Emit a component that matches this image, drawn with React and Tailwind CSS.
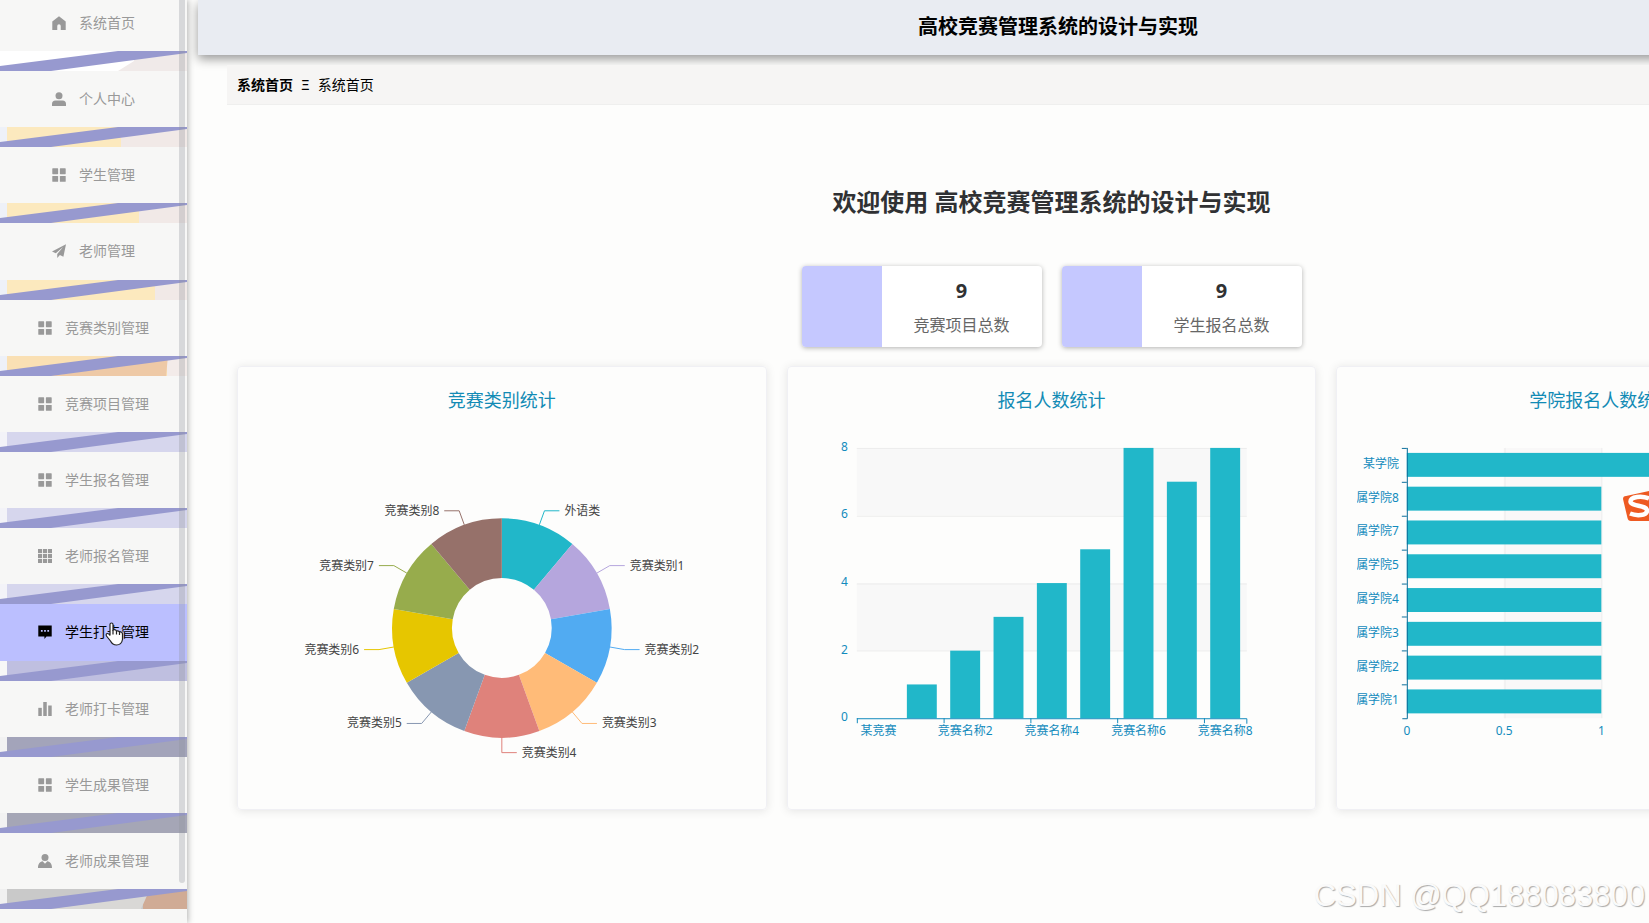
import React from "react";

// Sidebar icons, all on a 24x24 box
const icons = {
  home: <path d="M12 0.500 0.500 9.500V24H9v-7a3 3 0 0 1 6 0v7h8.500V9.500z" />,
  user: (
    <>
      <circle cx="12" cy="6.5" r="6" />
      <path d="M0 24v-3.500a6 6 0 0 1 6-6h12a6 6 0 0 1 6 6V24z" />
    </>
  ),
  grid: (
    <>
      <rect x="0.500" y="0.500" width="10" height="10" rx="1" />
      <rect x="13.500" y="0.500" width="10" height="10" rx="1" />
      <rect x="0.500" y="13.500" width="10" height="10" rx="1" />
      <rect x="13.500" y="13.500" width="10" height="10" rx="1" />
    </>
  ),
  send: <path d="M24 0.500 0 13l6.500 3L19 5 9 17v7l4.500-5 6 3z" />,
  grid9: (
    <>
      {[0, 8.5, 17].map((x) =>
        [0, 8.5, 17].map((y) => (
          <rect key={`${x}-${y}`} x={x} y={y} width="7" height="7" />
        ))
      )}
    </>
  ),
  chat: (
    <path
      fillRule="evenodd"
      d="M0.500 1h23v18.500h-9L11 24v-4.500H0.500zM5 8.500v3h3v-3zM10.500 8.500v3h3v-3zM16 8.500v3h3v-3z"
    />
  ),
  chart: (
    <>
      <rect x="0.500" y="10" width="6" height="14" />
      <rect x="9" y="0" width="6" height="24" />
      <rect x="17.500" y="6" width="6" height="18" />
    </>
  ),
  person: (
    <>
      <circle cx="12" cy="6" r="6" />
      <path d="M0 24c0-7 3-10.500 8-11.500l4 4 4-4c5 1 8 4.500 8 11.500z" />
    </>
  ),
};

// bg is the part of the backdrop that shows under each item
const menu = [
  { label: "系统首页", icon: "home", left: "#ffffff", bg: "#ffffff", right: "#f0eae9", split: 118 },
  { label: "个人中心", icon: "user", left: "#eef1f8", bg: "#fce9be", right: "#f1e9e7", split: 121 },
  { label: "学生管理", icon: "grid", left: "#eef1f8", bg: "#fce9be", right: "#f1e9e7", split: 139 },
  { label: "老师管理", icon: "send", left: "#eef1f8", bg: "#fce9be", right: "#f1e9e7", split: 155 },
  { label: "竞赛类别管理", icon: "grid", left: "#eef1f8", bg: "#fae0b4", right: "#f3ebe9", split: 167 },
  { label: "竞赛项目管理", icon: "grid", left: "#f3f3f8", bg: "#d6d6ed", right: "#d6d6ed", split: 187 },
  { label: "学生报名管理", icon: "grid", left: "#f3f3f8", bg: "#d6d6ed", right: "#d6d6ed", split: 187 },
  { label: "老师报名管理", icon: "grid9", left: "#f3f3f8", bg: "#d6d6ed", right: "#d6d6ed", split: 187 },
  { label: "学生打卡管理", icon: "chat", active: true, left: "#f7f7f7", bg: "#bfbfe0", right: "#b3b3de", split: 187 },
  { label: "老师打卡管理", icon: "chart", left: "#f2f2f2", bg: "#a3a4ba", right: "#a3a4ba", split: 187 },
  { label: "学生成果管理", icon: "grid", left: "#f2f2f2", bg: "#a5a6b6", right: "#a5a6b6", split: 187 },
  { label: "老师成果管理", icon: "person", left: "#f0f0f0", bg: "#c9c9c9", right: "#d0ab95", split: 143 },
];

const pieData = [
  { name: "外语类", color: "#21b7c9" },
  { name: "竞赛类别1", color: "#b5a6dd" },
  { name: "竞赛类别2", color: "#51abf2" },
  { name: "竞赛类别3", color: "#ffbb78" },
  { name: "竞赛类别4", color: "#df827b" },
  { name: "竞赛类别5", color: "#8797b1" },
  { name: "竞赛类别6", color: "#e6c600" },
  { name: "竞赛类别7", color: "#97ac4c" },
  { name: "竞赛类别8", color: "#96716a" },
];

const signups = [
  { name: "某竞赛", value: 0 },
  { name: "竞赛名称1", value: 1 },
  { name: "竞赛名称2", value: 2 },
  { name: "竞赛名称3", value: 3 },
  { name: "竞赛名称4", value: 4 },
  { name: "竞赛名称5", value: 5 },
  { name: "竞赛名称6", value: 8 },
  { name: "竞赛名称7", value: 7 },
  { name: "竞赛名称8", value: 8 },
];

const colleges = [
  { name: "某学院", value: 2 },
  { name: "属学院8", value: 1 },
  { name: "属学院7", value: 1 },
  { name: "属学院5", value: 1 },
  { name: "属学院4", value: 1 },
  { name: "属学院3", value: 1 },
  { name: "属学院2", value: 1 },
  { name: "属学院1", value: 1 },
];

const stats = [
  { label: "竞赛项目总数", value: 9 },
  { label: "学生报名总数", value: 9 },
];

// Slanted ribbon between two menu items
const Ribbon = ({ item }) => (
  <svg className="block h-5 w-full shrink-0" viewBox="0 0 187 20" preserveAspectRatio="none">
    <rect width="187" height="20" fill={item.bg} />
    <rect x={item.split} width={187 - item.split} height="20" fill={item.right} />
    {item.icon === "home" && <path d="M118 20 L134 10 V0 H110 V20z" fill="#ffffff" />}
    {item.label === "竞赛类别管理" && <path d="M50 20 L187 0 H168 L166 20z" fill="#eec9a6" />}
    {item.icon === "person" && <path d="M50 20 L187 0 H150 L141 20z" fill="#d9d8d6" />}
    <rect width="7" height="20" fill={item.left} />
    <path d="M0 15 L118 0 H187 V2 L51 20 H0z" fill="#9799cf" />
  </svg>
);

const MenuItem = ({ item }) => (
  <a
    href="#"
    className={`flex items-center justify-center gap-[13px] text-sm ${
      item.icon === "home" ? "h-[51px] pb-1.5" : "flex-1"
    } ${item.active ? "bg-[#bbbfff] text-black" : "bg-[#f7f7f6] text-[#999999]"}`}
  >
    <svg className="h-3.5 w-3.5 fill-current" viewBox="0 0 24 24">
      {icons[item.icon]}
    </svg>
    {item.label}
  </a>
);

const PieChart = () => {
  const cx = 264.5;
  const cy = 260.5;
  const step = 360 / pieData.length;
  const point = (r, deg) => {
    const a = ((deg - 90) * Math.PI) / 180;
    return [cx + r * Math.cos(a), cy + r * Math.sin(a)];
  };
  return (
    <svg className="block w-full" viewBox="0 45 529 397">
      {pieData.map((d, i) => {
        const [x1, y1] = point(110, i * step);
        const [x2, y2] = point(110, (i + 1) * step);
        const [x3, y3] = point(50, (i + 1) * step);
        const [x4, y4] = point(50, i * step);
        const mid = (i + 0.5) * step;
        const [sx, sy] = point(110, mid);
        const [ex, ey] = point(125, mid);
        const dir = mid <= 180 ? 1 : -1;
        return (
          <g key={d.name}>
            <path
              d={`M${x1} ${y1}A110 110 0 0 1 ${x2} ${y2}L${x3} ${y3}A50 50 0 0 0 ${x4} ${y4}z`}
              fill={d.color}
            />
            <path d={`M${sx} ${sy}L${ex} ${ey}h${15 * dir}`} fill="none" stroke={d.color} />
            <text
              x={ex + 20 * dir}
              y={ey + 4}
              fontSize="12"
              fill="#444444"
              textAnchor={dir === 1 ? "start" : "end"}
            >
              {d.name}
            </text>
          </g>
        );
      })}
    </svg>
  );
};

const BarChart = () => {
  const left = 69;
  const bottom = 351;
  const unit = 271 / 8;
  const step = 391 / signups.length;
  return (
    <svg className="block w-full" viewBox="0 45 529 397" fontSize="12" fill="#128bbd">
      <rect x={left} y={bottom - unit * 8} width="391" height={unit * 2} fill="#f8f8f8" />
      <rect x={left} y={bottom - unit * 4} width="391" height={unit * 2} fill="#f8f8f8" />
      {[0, 2, 4, 6, 8].map((v) => (
        <g key={v}>
          {v > 0 && <path d={`M${left} ${Math.round(bottom - v * unit) + 0.5}h391`} stroke="#ececec" />}
          <text x="60" y={bottom - v * unit + 3} textAnchor="end">
            {v}
          </text>
        </g>
      ))}
      {signups.map((d, i) => (
        <g key={d.name}>
          <rect
            x={left + (i + 0.5) * step - 15}
            y={bottom - d.value * unit}
            width="30"
            height={d.value * unit}
            fill="#21b7c9"
          />
          {i % 2 === 0 && (
            <>
              <path d={`M${Math.round(left + i * step) + 0.5} ${bottom}v5`} stroke="#128bbd" />
              <text x={left + (i + 0.5) * step} y="368" textAnchor="middle">
                {d.name}
              </text>
            </>
          )}
        </g>
      ))}
      <path d={`M${left} ${bottom + 0.5}h391v5`} fill="none" stroke="#128bbd" />
    </svg>
  );
};

const CollegeChart = () => {
  const left = 70;
  const top = 80;
  const step = 271 / colleges.length;
  return (
    <svg className="block w-full" viewBox="0 45 529 397" fontSize="12" fill="#128bbd">
      <defs>
        <clipPath id="labels">
          <rect x="20" y="46" width="500" height="395" />
        </clipPath>
      </defs>
      <rect x={left + 97} y={top} width="98" height="271" fill="#f9f8f8" />
      <rect x={left + 292} y={top} width="98" height="271" fill="#f9f8f8" />
      {[0, 0.5, 1, 1.5, 2].map((v) => (
        <g key={v}>
          <path d={`M${Math.round(left + v * 195) + 0.5} ${top}v271`} stroke="#ececec" />
          <text x={left + v * 195} y="368" textAnchor="middle">
            {v}
          </text>
        </g>
      ))}
      {colleges.map((d, i) => (
        <g key={d.name}>
          <rect x={left} y={top + i * step + 5} width={d.value * 195} height="24" fill="#21b7c9" />
          <path d={`M${left} ${Math.round(top + i * step) + 0.5}h-5`} stroke="#0b6f9c" />
          <text x="62" y={top + (i + 0.5) * step + 3} textAnchor="end" clipPath="url(#labels)">
            {d.name}
          </text>
        </g>
      ))}
      <path d={`M${left + 0.5} ${top}v271.500h-5`} fill="none" stroke="#0b6f9c" />
    </svg>
  );
};

const ChartCard = ({ title, children }) => (
  <section className="rounded-sm border border-[#f0f0f4] pt-5 shadow-[0_1px_10px_rgba(0,0,0,0.1)]">
    <h3 className="text-center text-lg leading-[26px] text-[#128bb5]">{title}</h3>
    {children}
  </section>
);

const App = () => {
  return (
    <div className="relative flex h-screen overflow-hidden bg-[#fdfdfc] font-['Noto_Sans','Noto_Sans_CJK_SC',sans-serif]">
      {/* Sidebar */}
      <aside className="relative flex w-[187px] shrink-0 flex-col shadow-[1px_0_6px_rgba(0,0,0,0.3)]">
        <nav className="flex flex-1 flex-col">
          {menu.map((item) => (
            <React.Fragment key={item.label}>
              <MenuItem item={item} />
              <Ribbon item={item} />
            </React.Fragment>
          ))}
        </nav>
        <div className="h-3.5 bg-[#f7f7f6]" />
        {/* Scrollbar thumb */}
        <div className="absolute top-0 right-0.5 bottom-10 w-1.5 rounded-b bg-[#909399]/30" />
      </aside>

      {/* Main content */}
      <main className="ml-[11px] min-w-[1720px] flex-1">
        <header className="flex h-[55px] items-center justify-center bg-[#e9ecf2] pb-0.5 shadow-[0_4px_10px_rgba(0,0,0,0.4)]">
          <h1 className="text-xl font-bold text-black">高校竞赛管理系统的设计与实现</h1>
        </header>
        <div className="mt-2.5 ml-[29px]">
          <div className="flex h-10 items-center gap-2 border-b border-[#efefee] bg-[#f6f5f4] px-2.5 text-sm text-black">
            <a href="#" className="font-bold">系统首页</a>
            <span>Ξ</span>
            <span>系统首页</span>
          </div>
          <div className="mr-[52px] ml-2.5">
            <h2 className="mt-[79px] text-center text-2xl leading-9 font-bold text-[#303133]">
              欢迎使用 高校竞赛管理系统的设计与实现
            </h2>
            <div className="mt-[46px] flex justify-center gap-5">
              {stats.map((s) => (
                <div
                  key={s.label}
                  className="flex h-[81px] w-60 overflow-hidden rounded bg-white shadow-[0_1px_5px_rgba(0,0,0,0.3)]"
                >
                  <div className="w-20 bg-[#c5c8ff]" />
                  <div className="flex flex-1 flex-col items-center justify-center gap-1 pt-1">
                    <strong className="text-xl leading-7 text-[#303133]">{s.value}</strong>
                    <span className="text-base leading-8 text-[#666666]">{s.label}</span>
                  </div>
                </div>
              ))}
            </div>
            <div className="mt-[19px] grid grid-cols-3 gap-5">
              <ChartCard title="竞赛类别统计">
                <PieChart />
              </ChartCard>
              <ChartCard title="报名人数统计">
                <BarChart />
              </ChartCard>
              <ChartCard title="学院报名人数统计">
                <CollegeChart />
              </ChartCard>
            </div>
          </div>
        </div>
      </main>

      {/* Input method badge */}
      <svg className="absolute top-[490px] -right-1.5 h-8 w-8" viewBox="0 0 32 32">
        <path d="M3 6 26 1q3-1 3.500 2L32 28q0 3-3 3L8 31q-3 0-3.500-3L0 9q0-3 3-3z" fill="#ee5a22" />
        <path
          d="M26 8.500C19 5.500 7.500 6.500 7.500 11.500S24 15 24 20.500 13 26 7 23.500"
          fill="none"
          stroke="#ffffff"
          strokeWidth="4.500"
        />
      </svg>

      {/* Hand pointer */}
      <svg className="absolute top-[622px] left-[105px] h-6 w-5" viewBox="0 0 20 24">
        <path
          d="M5 2.500q0-1.500 1.500-1.500T8 2.500V8q2.500-1 3.500 1 2.500-.500 3 1 3-.500 3 2.500v5q-1 5.500-6 5.500-4 0-6-4L1.500 14q-1-2.500 1-2.500 1.500 0 2.500 2z"
          fill="#ffffff"
          stroke="#222222"
          strokeWidth="1.200"
        />
        <path d="M8 8v4.500M11.500 9v3.500M14.500 10v3" stroke="#222222" strokeWidth="1.200" />
      </svg>

      <p className="absolute right-1 bottom-1 font-['Liberation_Sans',sans-serif] text-[31px] text-[#fafafa] [text-shadow:1px_1px_1px_#aaaaaa]">
        CSDN @QQ188083800
      </p>
    </div>
  );
};

export default App;
